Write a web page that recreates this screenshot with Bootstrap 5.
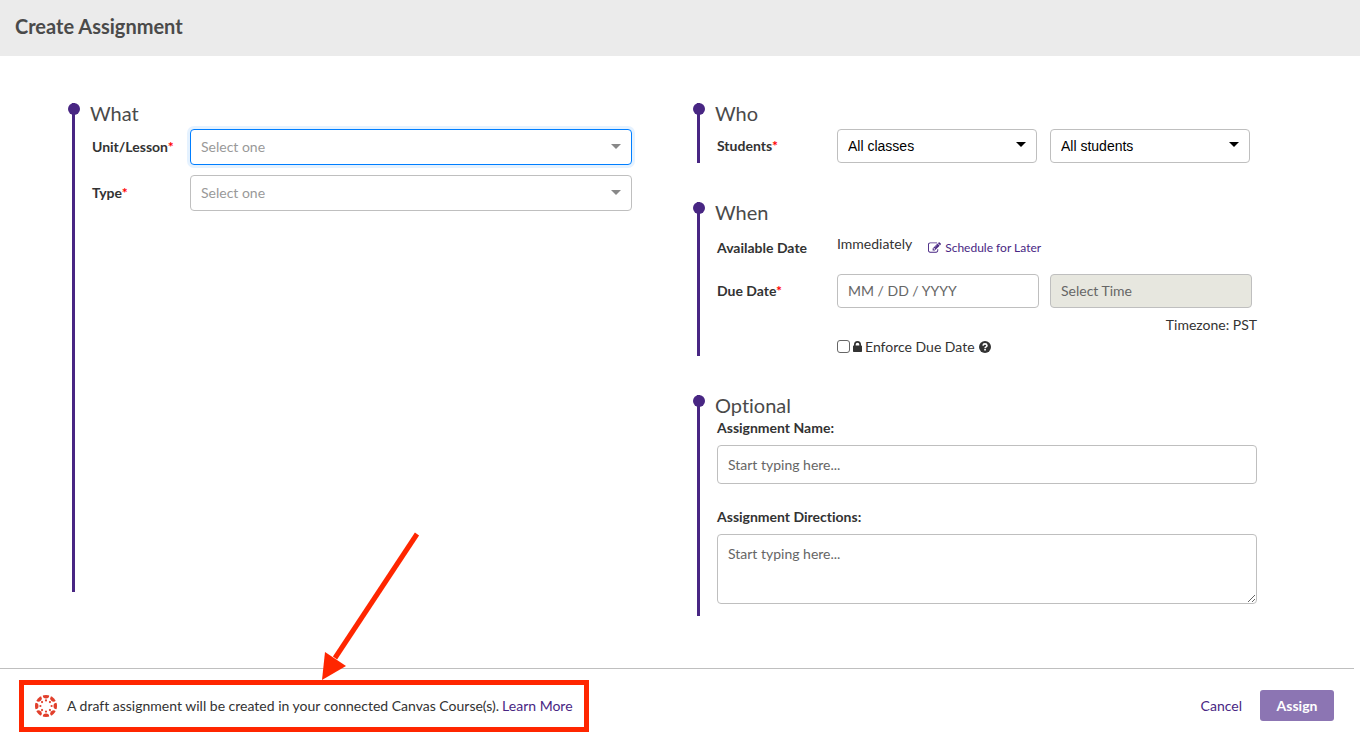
<!DOCTYPE html>
<html lang="en">
<head>
<meta charset="utf-8">
<meta name="viewport" content="width=device-width, initial-scale=1">
<title>Create Assignment</title>
<link rel="stylesheet" href="https://cdn.jsdelivr.net/npm/bootstrap@5.3.0/dist/css/bootstrap.min.css">
<style>
  body { font-family: Lato, sans-serif; font-size: 14px; line-height: 20px; color: #333; font-variant-ligatures: none; }
  a { color: #482683; text-decoration: none; }
  .page-head { background: #ebebeb; padding: 14px 15px 18px; }
  .page-head h1 { font-size: 20px; line-height: 24px; font-weight: 700; color: #4a4a4a; margin: 0; }
  main { padding: 47px 38px 0 72px; }
  .pane { padding-right: 65px; }
  .step { position: relative; border-left: 3px solid #482683; padding-left: 17px; }
  .step::before { content: ""; position: absolute; left: -7px; top: 0; width: 12px; height: 12px; border-radius: 50%; background: #482683; }
  .step h2 { font-size: 20px; line-height: 20px; font-weight: 400; color: #4a4a4a; margin: 0 0 0 -2px; padding-bottom: 2px; }
  .step-what { margin-bottom: 24px; }
  .right-steps { gap: 39px; }
  .field-label { font-weight: 700; font-size: 14px; line-height: 20px; flex: none; }
  .field-label sup { color: #f00; font-size: 14px; top: 0; line-height: 0; vertical-align: baseline; }
  .label-what { width: 98px; }
  .label-right { width: 120px; }
  .form-control, .form-select { font-size: 14px; line-height: 20px; border: 1px solid #bfbfbf; border-radius: 4px; padding: 6px 10px; color: #333; }
  .form-control::placeholder { color: #666; }
  .form-select { background-color: #fff; background-repeat: no-repeat; background-size: 10px 5px; }
  .select-what { height: 36px; color: #999; background-position: right 10px top 14px; background-image: url("data:image/svg+xml,%3Csvg xmlns='http://www.w3.org/2000/svg' viewBox='0 0 10 5'%3E%3Cpath fill='%23888' d='M0 0h10L5 5z'/%3E%3C/svg%3E"); }
  .select-what.is-open { border-color: #007eff; box-shadow: 0 0 0 3px rgba(0,126,255,.1); }
  .select-who { width: 200px; height: 34px; color: #000; font-family: "Liberation Sans", sans-serif; background-position: right 10px top 12px; background-image: url("data:image/svg+xml,%3Csvg xmlns='http://www.w3.org/2000/svg' viewBox='0 0 10 5'%3E%3Cpath d='M0 0h10L5 5z'/%3E%3C/svg%3E"); }
  .who-gap { gap: 13px; }
  .due-gap { gap: 11px; }
  .due-input { width: 202px; height: 34px; padding-top: 5px; padding-bottom: 7px; }
  .due-input:disabled { background: #e7e7df; }
  .what-fields { gap: 10px; padding-top: 4px; }
  .who-fields { padding-top: 4px; }
  .available { height: 24px; margin: 10px 0 16px; }
  .later { font-size: 12px; margin-left: 16px; gap: 4px; }
  .zone { margin: 7px 0 2px; }
  .enforce { margin-left: 120px; height: 19px; }
  .enforce .form-check-input { width: 13px; height: 13px; margin: 0 3px 0 0; border: 1px solid #666; border-radius: 3px; }
  .enforce label { gap: 3px; }
  .optional-fields { padding-top: 1px; }
  .name-input { height: 39px; margin: 7px 0 23px; }
  .directions { height: 70px; min-height: 70px; margin: 7px 0 12px; padding-top: 9px; resize: vertical; }
  .page-foot { margin: 52px 6px 0 0; border-top: 1px solid #bfbfbf; padding: 11px 20px 9px 19px; }
  .notice { position: relative; border: 5px solid #ff2600; height: 52px; padding: 0 11px; }
  .notice-text { margin: 0 3px 0 10px; }
  .notice-arrow { position: absolute; left: 297px; bottom: 47px; pointer-events: none; }
  .foot-actions { gap: 18px; padding-bottom: 2px; }
  .btn-assign { background: #8c75b3; color: #fff; border: 0; border-radius: 3px; font-size: 14px; font-weight: 700; line-height: 21px; padding: 5px 16px; min-width: 74px; }
  .btn-cancel { color: #482683; border: 0; font-size: 14px; line-height: 21px; padding: 5px 0; }
</style>
</head>
<body>
<header class="page-head"><h1>Create Assignment</h1></header>

<main>
  <form class="row g-0" id="assignment">
    <div class="col-6 pane d-flex flex-column">
      <section class="step step-what flex-grow-1">
        <h2>What</h2>
        <div class="what-fields d-flex flex-column">
          <div class="d-flex align-items-center">
            <label class="field-label label-what" for="unit">Unit/Lesson<sup>*</sup></label>
            <select class="form-select select-what is-open" id="unit"><option>Select one</option></select>
          </div>
          <div class="d-flex align-items-center">
            <label class="field-label label-what" for="type">Type<sup>*</sup></label>
            <select class="form-select select-what" id="type"><option>Select one</option></select>
          </div>
        </div>
      </section>
    </div>

    <div class="col-6 pane right-steps d-flex flex-column">
      <section class="step">
        <h2>Who</h2>
        <div class="who-fields d-flex align-items-center">
          <label class="field-label label-right" for="classes">Students<sup>*</sup></label>
          <div class="d-flex who-gap">
            <select class="form-select select-who" id="classes"><option>All classes</option></select>
            <select class="form-select select-who" aria-label="Students in class"><option>All students</option></select>
          </div>
        </div>
      </section>

      <section class="step">
        <h2>When</h2>
        <div class="available d-flex align-items-end">
          <span class="field-label label-right">Available Date</span>
          <span class="align-self-start">Immediately</span>
          <a class="later d-flex align-items-center" href="#">
            <svg width="13" height="12" viewBox="0 0 1792 1600" fill="currentColor" aria-hidden="true"><path fill-rule="evenodd" d="M1408 962v190q0 119-84.500 203.500T1120 1440H288q-119 0-203.500-84.500T0 1152V320q0-119 84.500-203.500T288 32h832q63 0 117 25 15 7 18 23 3 17-9 29l-49 49q-14 14-32 8-23-6-45-6H288q-66 0-113 47t-47 113v832q0 66 47 113t113 47h832q66 0 113-47t47-113v-126q0-13 9-22l64-64q15-15 35-7t20 29z"/><path fill-rule="evenodd" d="M1312 192l288 288-672 672H640V864zM888 1056l116-116-152-152-116 116v56h96v96h56zM1328 336q-16-16-33 1L945 687q-17 17-1 33t33-1l350-350q17-17 1-33zM1756 324l-92 92-288-288 92-92q28-28 68-28t68 28l152 152q28 28 28 68t-28 68z"/></svg>
            <span>Schedule for Later</span>
          </a>
        </div>
        <div class="d-flex align-items-center">
          <label class="field-label label-right" for="due">Due Date<sup>*</sup></label>
          <div class="d-flex due-gap">
            <input class="form-control due-input" id="due" type="text" placeholder="MM / DD / YYYY">
            <input class="form-control due-input" type="text" placeholder="Select Time" aria-label="Due time" disabled>
          </div>
        </div>
        <div class="zone text-end">Timezone: PST</div>
        <div class="enforce d-flex align-items-center">
          <input class="form-check-input" type="checkbox" id="enforce">
          <label class="d-flex align-items-center" for="enforce">
            <svg width="9" height="11" viewBox="0 0 9 11" aria-hidden="true"><path fill="#333" d="M1 4.500V3.500a3.500 3.500 0 0 1 7 0v1h.3q.7 0 .7.700v5q0 .8-.7.800H.7Q0 11 0 10.200v-5q0-.7.700-.7zM2.700 4.500h3.600v-1a1.800 1.800 0 0 0-3.600 0z"/></svg>
            Enforce Due Date
          </label>
          <svg class="ms-1" width="14" height="12" viewBox="0 0 14 12" role="img" aria-label="Help"><circle cx="6" cy="6" r="6" fill="#333"/><path d="M4 4.600Q4.200 2.900 6 2.900T8 4.500Q8 5.400 7 5.900 6.100 6.300 6.100 7.200" fill="none" stroke="#fff" stroke-width="1.600"/><path fill="#fff" d="M5.200 8h1.700v1.600H5.200z"/></svg>
        </div>
      </section>

      <section class="step">
        <h2>Optional</h2>
        <div class="optional-fields">
          <label class="field-label d-block" for="name">Assignment Name:</label>
          <input class="form-control name-input" id="name" type="text" placeholder="Start typing here...">
          <label class="field-label d-block" for="directions">Assignment Directions:</label>
          <textarea class="form-control directions" id="directions" placeholder="Start typing here..."></textarea>
        </div>
      </section>
    </div>
  </form>
</main>

<footer class="page-foot d-flex align-items-center justify-content-between">
  <div class="notice d-flex align-items-center">
    <svg class="flex-shrink-0" width="22" height="22" viewBox="-11 -11 22 22" fill="#e13f2b" aria-hidden="true">
      <defs>
        <clipPath id="disc"><circle r="11"/></clipPath>
        <g id="spoke"><circle cy="-10.700" r="3.200"/><circle cy="-5.600" r="1.100"/></g>
      </defs>
      <g clip-path="url(#disc)">
        <use href="#spoke"/><use href="#spoke" transform="rotate(45)"/><use href="#spoke" transform="rotate(90)"/><use href="#spoke" transform="rotate(135)"/>
        <use href="#spoke" transform="rotate(180)"/><use href="#spoke" transform="rotate(225)"/><use href="#spoke" transform="rotate(270)"/><use href="#spoke" transform="rotate(315)"/>
      </g>
    </svg>
    <span class="notice-text">A draft assignment will be created in your connected Canvas Course(s).</span>
    <a href="#">Learn More</a>
    <svg class="notice-arrow" width="100" height="150" viewBox="0 0 100 150" aria-hidden="true"><path d="M96 4L14 128" stroke="#ff2600" stroke-width="5"/><path fill="#ff2600" d="M1 150L4 122l21 14z"/></svg>
  </div>
  <div class="foot-actions d-flex align-items-center">
    <button class="btn btn-cancel" type="button">Cancel</button>
    <button class="btn btn-assign" type="submit" form="assignment">Assign</button>
  </div>
</footer>
<script src="https://cdn.jsdelivr.net/npm/bootstrap@5.3.0/dist/js/bootstrap.bundle.min.js"></script>
</body>
</html>
